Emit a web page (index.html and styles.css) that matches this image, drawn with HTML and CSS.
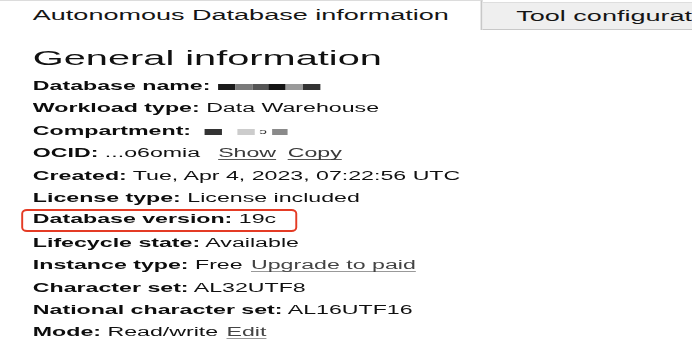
FILE: index.html
```html
<!DOCTYPE html>
<html>
<head>
<meta charset="utf-8">
<link rel="stylesheet" href="styles.css">
</head>
<body>
<div class="stretch">
  <div class="tabs">
    <div class="tab tab-active">Autonomous Database information</div>
    <div class="tab tab-idle">Tool configuration</div>
  </div>
  <div class="content">
    <h2 class="title">General information</h2>
    <div class="row"><b>Database name:</b> <span class="redact"><i class="blk b1"></i><i class="blk b2"></i><i class="blk b3"></i><i class="blk b4"></i><i class="blk b5"></i><i class="blk b6"></i></span></div>
    <div class="row"><b>Workload type:</b> Data Warehouse</div>
    <div class="row"><b>Compartment:</b> <span class="redact shift"><i class="blk c1"></i><i class="blk gap"></i><i class="blk c2"></i><i class="glyph">ɔ</i><i class="blk c3"></i></span></div>
    <div class="row"><b>OCID:</b> ...o6omia <a class="link dark">Show</a><a class="link dark">Copy</a></div>
    <div class="row"><b>Created:</b> Tue, Apr 4, 2023, 07:22:56 UTC</div>
    <div class="row"><b>License type:</b> License included</div>
    <div class="row hl"><b>Database version:</b> 19c</div>
    <div class="row"><b>Lifecycle state:</b> Available</div>
    <div class="row"><b>Instance type:</b> Free <a class="link light">Upgrade to paid</a></div>
    <div class="row"><b>Character set:</b> AL32UTF8</div>
    <div class="row"><b>National character set:</b> AL16UTF16</div>
    <div class="row"><b>Mode:</b> Read/write <a class="link light">Edit</a></div>
  </div>
</div>
</body>
</html>
```

FILE: styles.css
```css
html, body {
  margin: 0;
  padding: 0;
  background: #ffffff;
  overflow: hidden;
}
body {
  font-family: "Liberation Sans", Arial, sans-serif;
  color: #151515;
}
.stretch {
  width: 358.5px;
  transform: scaleX(1.93);
  transform-origin: 0 0;
}
.tabs {
  display: flex;
  height: 30px;
}
.tab {
  box-sizing: border-box;
  font-size: 14px;
  white-space: nowrap;
  overflow: hidden;
}
.tab-active {
  width: 250px;
  height: 30px;
  border-top: 1px solid #dcdcdc;
  border-right: 1px solid #c8c8c8;
  padding-left: 17px;
  line-height: 29px;
  background: #ffffff;
}
.tab-idle {
  flex: 1;
  margin-top: 2px;
  height: 28px;
  background: #efefef;
  border-top: 1px solid #dedede;
  border-bottom: 1px solid #c8c8c8;
  padding-left: 17.5px;
  line-height: 26px;
}
.content {
  padding-left: 17px;
}
.title {
  margin: 14px 0 3px;
  font-size: 20.6px;
  line-height: 28px;
  font-weight: normal;
  color: #111;
}
.row {
  box-sizing: border-box;
  height: 22.4px;
  line-height: 22.4px;
  font-size: 12px;
  white-space: nowrap;
  color: #111;
}
.row b {
  color: #0d0d0d;
}
.hl {
  width: 143px;
  margin-left: -5.7px;
  padding-left: 4.7px;
  border: 2.5px solid #e43b25;
  border-left-width: 1.2px;
  border-right-width: 1.2px;
  border-radius: 3px / 4.5px;
  line-height: 17.4px;
}
.redact {
  display: inline-block;
  vertical-align: middle;
  height: 6px;
  line-height: 6px;
  margin-left: 1px;
}
.shift {
  margin-left: 3.5px;
}
.blk {
  display: inline-block;
  width: 8.7px;
  height: 6px;
  vertical-align: top;
}
.b1 { background: #1a1a1a; }
.b2 { background: #7a7a7a; }
.b3 { background: #555555; }
.b4 { background: #141414; }
.b5 { background: #9a9a9a; }
.b6 { background: #333333; }
.c1 { background: #333333; }
.gap { background: transparent; }
.c2 { background: #cccccc; }
.c3 { background: #8a8a8a; }
.glyph {
  display: inline-block;
  width: 8.7px;
  font-style: normal;
  font-size: 8px;
  line-height: 6px;
  vertical-align: top;
  text-align: center;
  color: #333;
}
.link {
  text-decoration: underline;
  text-underline-offset: 2px;
}
.dark {
  color: #3a3a3a;
  text-decoration-color: #555;
  margin-left: 6px;
}
.light {
  color: #444;
  text-decoration-color: #999;
  margin-left: 1px;
}
```
